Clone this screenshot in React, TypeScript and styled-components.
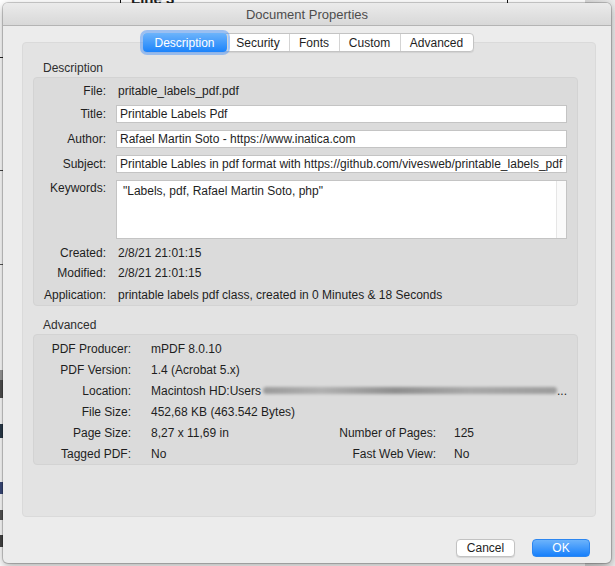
import * as React from "react";
import styled, { createGlobalStyle, css } from "styled-components";

const Global = createGlobalStyle`
  html, body {
    margin: 0;
    padding: 0;
    background: #ffffff;
  }
  * {
    box-sizing: border-box;
  }
`;

const Desktop = styled.div`
  position: relative;
  width: 615px;
  height: 566px;
  overflow: hidden;
  background: #ffffff;
  font-family: "Liberation Sans", Arial, sans-serif;
  color: #1e1e1e;
`;

// pieces of the document that peeks out behind the sheet
const DocLine = styled.div<{ $x: number }>`
  position: absolute;
  top: 0;
  left: ${(p) => p.$x}px;
  width: 1px;
  height: 6px;
  background: #111;
`;

const DocText = styled.div`
  position: absolute;
  top: -10px;
  left: 131px;
  font-size: 15px;
  font-weight: bold;
  color: #222;
`;

const SideBar = styled.div`
  position: absolute;
  top: 0;
  right: 0;
  width: 30px;
  height: 566px;
  background: linear-gradient(to right, #d9d9d9, #ececec);
`;

const LeftMark = styled.div<{ $y: number; $h: number; $c: string }>`
  position: absolute;
  left: 0;
  top: ${(p) => p.$y}px;
  width: 3px;
  height: ${(p) => p.$h}px;
  background: ${(p) => p.$c};
`;

const Window = styled.div`
  position: absolute;
  left: 3px;
  top: 3px;
  width: 608px;
  height: 560px;
  display: flex;
  flex-direction: column;
  background: #ececec;
  border-radius: 5px;
  box-shadow: 0 0 0 1px rgba(0, 0, 0, 0.18), 0 3px 10px rgba(0, 0, 0, 0.35);
  overflow: hidden;
`;

const TitleBar = styled.div`
  height: 23px;
  flex: none;
  display: flex;
  align-items: center;
  justify-content: center;
  background: linear-gradient(to bottom, #ebebeb, #d8d8d8);
  border-bottom: 1px solid #b4b4b4;
  font-size: 13px;
  color: #4d4d4d;
`;

const TabStrip = styled.div`
  position: relative;
  z-index: 1;
  margin-top: 7px;
  align-self: center;
  display: flex;
  height: 19px;
  margin-left: 2px;
  background: #fff;
  border: 1px solid #c3c3c3;
  border-radius: 4px;
  box-shadow: 0 1px 1px rgba(0, 0, 0, 0.08);
`;

const Tab = styled.div<{ $w: number; $active?: boolean }>`
  width: ${(p) => p.$w}px;
  display: flex;
  align-items: center;
  justify-content: center;
  font-size: 12px;
  color: #1e1e1e;
  border-left: 1px solid #d4d4d4;
  &:first-child {
    border-left: 0;
  }
  ${(p) =>
    p.$active &&
    css`
      margin: -1px 0 -1px -1px;
      color: #fff;
      background: linear-gradient(to bottom, #6db4fb, #1b83fb);
      border-radius: 4px;
      box-shadow: 0 0 0 3px rgba(90, 155, 245, 0.55);
    `}
`;

const TabPanel = styled.div`
  margin: -10px 15px 0 19px;
  height: 475px;
  padding-top: 17px;
  background: #e3e3e3;
  border: 1px solid #dadada;
  border-radius: 4px;
`;

const SectionTitle = styled.div<{ $mt?: number }>`
  height: 17px;
  line-height: 17px;
  margin-top: ${(p) => p.$mt ?? 0}px;
  padding-left: 20px;
  font-size: 12px;
  color: #2e2e2e;
`;

const Group = styled.div<{ $pt: number; $pb: number }>`
  margin: 0 17px 0 10px;
  padding: ${(p) => p.$pt}px 10px ${(p) => p.$pb}px 0;
  background: #dbdbdb;
  border: 1px solid #d3d3d3;
  border-radius: 4px;
`;

const Row = styled.div<{ $h: number; $mt?: number; $top?: boolean }>`
  display: grid;
  grid-template-columns: 72px 1fr;
  column-gap: 10px;
  height: ${(p) => p.$h}px;
  margin-top: ${(p) => p.$mt ?? 0}px;
  align-items: ${(p) => (p.$top ? "start" : "center")};
  font-size: 12px;
`;

const Label = styled.div<{ $pt?: number }>`
  text-align: right;
  line-height: 16px;
  padding-top: ${(p) => p.$pt ?? 0}px;
  white-space: nowrap;
`;

const Value = styled.div`
  line-height: 16px;
  padding-left: 2px;
  white-space: nowrap;
`;

const Field = styled.div`
  height: 18px;
  line-height: 16px;
  padding: 0 3px;
  background: #fff;
  border: 1px solid #c4c4c4;
  white-space: nowrap;
  overflow: hidden;
`;

const TextArea = styled.div`
  height: 59px;
  display: flex;
  background: #fff;
  border: 1px solid #c4c4c4;
`;

const TextAreaBody = styled.div`
  flex: 1;
  padding: 3px 0 0 6px;
  line-height: 14px;
`;

const Gutter = styled.div`
  width: 10px;
  background: #fafafa;
  border-left: 1px solid #e6e6e6;
`;

const InfoGrid = styled.div`
  display: grid;
  grid-template-columns: 97px 170px 135px 1fr;
  grid-auto-rows: 21px;
  align-items: center;
  font-size: 12px;
`;

const InfoLabel = styled.div`
  text-align: right;
  white-space: nowrap;
`;

const InfoValue = styled.div<{ $pl: number; $span?: boolean }>`
  padding-left: ${(p) => p.$pl}px;
  white-space: nowrap;
  ${(p) => p.$span && "grid-column: 2 / span 3;"}
  display: flex;
  align-items: center;
`;

const Redacted = styled.span`
  display: inline-block;
  width: 300px;
  height: 7px;
  margin-left: 2px;
  border-radius: 4px;
  background: linear-gradient(
    to right,
    #9a9a9a,
    #b0b0b0 20%,
    #8e8e8e 45%,
    #a8a8a8 70%,
    #9c9c9c
  );
  filter: blur(1.6px);
`;

const Footer = styled.div`
  display: flex;
  justify-content: flex-end;
  gap: 17px;
  margin-top: 22px;
  padding-right: 21px;
`;

const Button = styled.div<{ $w: number; $primary?: boolean }>`
  width: ${(p) => p.$w}px;
  height: 18px;
  display: flex;
  align-items: center;
  justify-content: center;
  font-size: 12px;
  border-radius: 4px;
  ${(p) =>
    p.$primary
      ? css`
          color: #fff;
          background: linear-gradient(to bottom, #6cb3fb, #1880fb);
          border: 1px solid #2c86f0;
        `
      : css`
          color: #1e1e1e;
          background: #fff;
          border: 1px solid #c2c2c2;
          box-shadow: 0 1px 1px rgba(0, 0, 0, 0.1);
        `}
`;

const tabs = [
  { name: "Description", w: 84 },
  { name: "Security", w: 62 },
  { name: "Fonts", w: 50 },
  { name: "Custom", w: 61 },
  { name: "Advanced", w: 73 },
];

export default function App() {
  return (
    <Desktop>
      <Global />
      <DocLine $x={120} />
      <DocLine $x={507} />
      <DocText>Line 3</DocText>
      <SideBar />
      <LeftMark $y={57} $h={1} $c="#222" />
      <LeftMark $y={170} $h={1} $c="#444" />
      <LeftMark $y={264} $h={1} $c="#555" />
      <LeftMark $y={370} $h={10} $c="#9a9a9a" />
      <LeftMark $y={380} $h={18} $c="#505050" />
      <LeftMark $y={424} $h={14} $c="#2a3a4a" />
      <LeftMark $y={482} $h={12} $c="#3a4a7a" />
      <LeftMark $y={510} $h={10} $c="#555" />
      <LeftMark $y={535} $h={12} $c="#444" />
      <Window>
        <TitleBar>Document Properties</TitleBar>
        <TabStrip>
          {tabs.map((t, i) => (
            <Tab key={t.name} $w={t.w} $active={i === 0}>
              {t.name}
            </Tab>
          ))}
        </TabStrip>
        <TabPanel>
          <SectionTitle>Description</SectionTitle>
          <Group $pt={5} $pb={2}>
            <Row $h={16}>
              <Label>File:</Label>
              <Value>pritable_labels_pdf.pdf</Value>
            </Row>
            <Row $h={18} $mt={6}>
              <Label>Title:</Label>
              <Field>Printable Labels Pdf</Field>
            </Row>
            <Row $h={18} $mt={7}>
              <Label>Author:</Label>
              <Field>Rafael Martin Soto - https://www.inatica.com</Field>
            </Row>
            <Row $h={18} $mt={7}>
              <Label>Subject:</Label>
              <Field>
                Printable Lables in pdf format with
                https://github.com/vivesweb/printable_labels_pdf
              </Field>
            </Row>
            <Row $h={59} $mt={7} $top>
              <Label $pt={0}>Keywords:</Label>
              <TextArea>
                <TextAreaBody>"Labels, pdf, Rafael Martin Soto, php"</TextAreaBody>
                <Gutter />
              </TextArea>
            </Row>
            <Row $h={16} $mt={6}>
              <Label>Created:</Label>
              <Value>2/8/21 21:01:15</Value>
            </Row>
            <Row $h={16} $mt={4}>
              <Label>Modified:</Label>
              <Value>2/8/21 21:01:15</Value>
            </Row>
            <Row $h={16} $mt={6}>
              <Label>Application:</Label>
              <Value>
                printable labels pdf class, created in 0 Minutes &amp; 18 Seconds
              </Value>
            </Row>
          </Group>
          <SectionTitle $mt={11}>Advanced</SectionTitle>
          <Group $pt={3} $pb={0}>
            <InfoGrid>
              <InfoLabel>PDF Producer:</InfoLabel>
              <InfoValue $pl={20} $span>
                mPDF 8.0.10
              </InfoValue>
              <InfoLabel>PDF Version:</InfoLabel>
              <InfoValue $pl={20} $span>
                1.4 (Acrobat 5.x)
              </InfoValue>
              <InfoLabel>Location:</InfoLabel>
              <InfoValue $pl={20} $span>
                Macintosh HD:Users
                <Redacted />
                ...
              </InfoValue>
              <InfoLabel>File Size:</InfoLabel>
              <InfoValue $pl={20} $span>
                452,68 KB (463.542 Bytes)
              </InfoValue>
              <InfoLabel>Page Size:</InfoLabel>
              <InfoValue $pl={20}>8,27 x 11,69 in</InfoValue>
              <InfoLabel>Number of Pages:</InfoLabel>
              <InfoValue $pl={18}>125</InfoValue>
              <InfoLabel>Tagged PDF:</InfoLabel>
              <InfoValue $pl={20}>No</InfoValue>
              <InfoLabel>Fast Web View:</InfoLabel>
              <InfoValue $pl={18}>No</InfoValue>
            </InfoGrid>
          </Group>
        </TabPanel>
        <Footer>
          <Button $w={59}>Cancel</Button>
          <Button $w={58} $primary>
            OK
          </Button>
        </Footer>
      </Window>
    </Desktop>
  );
}
